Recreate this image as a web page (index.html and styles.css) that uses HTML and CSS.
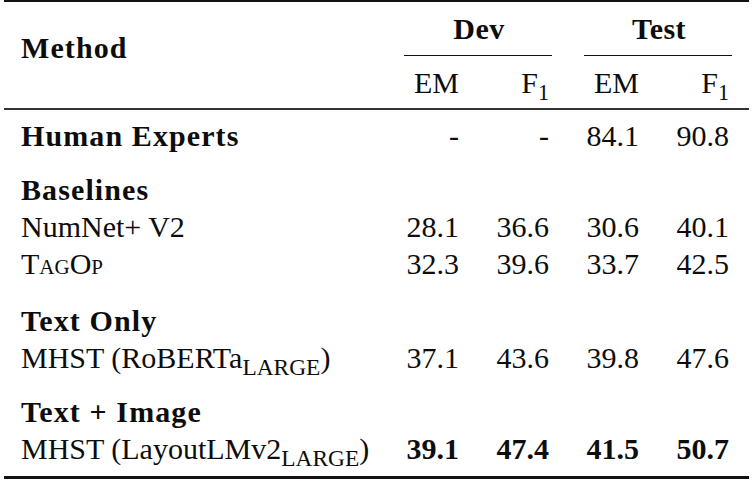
FILE: index.html
```html
<!DOCTYPE html>
<html>
<head>
<meta charset="utf-8">
<link rel="stylesheet" href="styles.css">
</head>
<body>
<div class="tbl">
  <div class="rule heavy"></div>

  <div class="head">
    <div class="method b">Method</div>
    <div class="grp dev b">Dev</div>
    <div class="grp test b">Test</div>
    <div class="cmid cdev"></div>
    <div class="cmid ctest"></div>
    <div class="num sub-h">EM</div>
    <div class="num sub-h">F<span class="sub">1</span></div>
    <div class="num sub-h">EM</div>
    <div class="num sub-h">F<span class="sub">1</span></div>
  </div>

  <div class="rule mid"></div>

  <div class="row first">
    <div class="lbl b">Human Experts</div>
    <div class="num">-</div><div class="num">-</div><div class="num">84.1</div><div class="num">90.8</div>
  </div>

  <div class="row gap">
    <div class="lbl b">Baselines</div>
  </div>
  <div class="row">
    <div class="lbl">NumNet+ V2</div>
    <div class="num">28.1</div><div class="num">36.6</div><div class="num">30.6</div><div class="num">40.1</div>
  </div>
  <div class="row">
    <div class="lbl"><span class="sc">TagOp</span></div>
    <div class="num">32.3</div><div class="num">39.6</div><div class="num">33.7</div><div class="num">42.5</div>
  </div>

  <div class="row gap wide">
    <div class="lbl b">Text Only</div>
  </div>
  <div class="row">
    <div class="lbl">MHST (RoBERTa<span class="sub subw">LARGE</span>)</div>
    <div class="num">37.1</div><div class="num">43.6</div><div class="num">39.8</div><div class="num">47.6</div>
  </div>

  <div class="row gap">
    <div class="lbl b">Text + Image</div>
  </div>
  <div class="row last">
    <div class="lbl">MHST (LayoutLMv2<span class="sub subw">LARGE</span>)</div>
    <div class="num nb">39.1</div><div class="num nb">47.4</div><div class="num nb">41.5</div><div class="num nb">50.7</div>
  </div>

  <div class="rule heavy bottom"></div>
</div>
</body>
</html>
```

FILE: styles.css
```css
html, body {
  margin: 0;
  padding: 0;
  background: #ffffff;
}

body {
  font-family: "Liberation Serif", "Times New Roman", serif;
  font-size: 30px;
  color: #0d0d0d;
}

.tbl {
  margin-left: 4px;
  width: 745px;
}

.rule {
  background: #111;
}

.heavy {
  height: 2px;
}

.bottom {
  height: 3px;
  margin-top: 9px;
}

.mid {
  height: 2px;
  background: #333;
  margin-top: 7px;
}

.head,
.row {
  display: grid;
  grid-template-columns: 385px repeat(4, 90px);
  line-height: 37px;
}

.head {
  grid-template-rows: 37px 17px 37px;
  padding-top: 8px;
}

.method {
  grid-column: 1;
  grid-row: 1 / 4;
  padding-left: 17px;
  padding-top: 19px;
  align-self: start;
}

.grp {
  grid-row: 1;
  text-align: center;
}

.dev { grid-column: 2 / 4; }
.test { grid-column: 4 / 6; }

.cmid {
  grid-row: 2;
  align-self: center;
  height: 1px;
  background: #111;
  margin: 0 17px 0 15px;
}

.cdev { grid-column: 2 / 4; }
.ctest { grid-column: 4 / 6; }

.sub-h {
  grid-row: 3;
}

.num {
  text-align: right;
  padding-right: 20px;
  white-space: nowrap;
}

.lbl {
  padding-left: 17px;
  white-space: nowrap;
}

.b {
  font-weight: bold;
  letter-spacing: 1.1px;
}

.grp.b {
  letter-spacing: 0.5px;
}

.nb {
  font-weight: bold;
}

.sc {
  font-variant: small-caps;
}

.sub {
  font-size: 0.74em;
  vertical-align: -0.3em;
  line-height: 0;
}

.subw {
  font-size: 0.78em;
}

.first {
  margin-top: 7px;
}

.gap {
  margin-top: 17px;
}

.gap.wide {
  margin-top: 20px;
}
```
